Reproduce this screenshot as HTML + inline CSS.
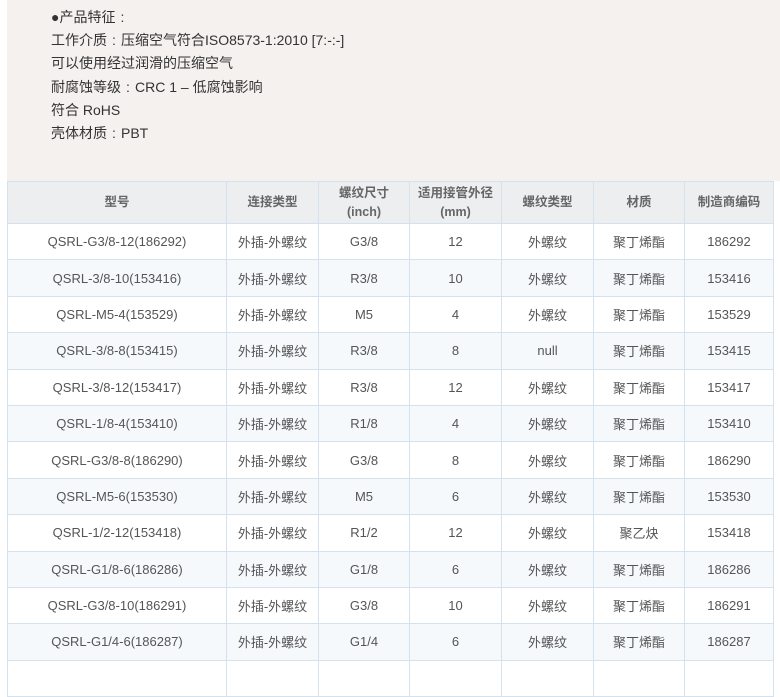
<!DOCTYPE html>
<html><head><meta charset="utf-8"><style>
body{margin:0;width:780px;height:667px;overflow:hidden;background:#fff;font-family:"Liberation Sans","Noto Sans CJK SC",sans-serif;color:#333}
.top{position:absolute;left:7px;top:0;width:773px;height:181px;background:#f4f1ef}
.txt{position:absolute;left:51px;top:6px;font-size:14px;line-height:23.2px;color:#333}
.c{display:inline-block;width:14px;text-align:center}
table{position:absolute;left:7px;top:181px;border-collapse:collapse;table-layout:fixed;width:766px}
td,th{border:1px solid #d5e1ec;text-align:center;font-size:13px;color:#555;font-weight:normal;padding:0}
th{background:#eceef0;height:41px;line-height:19px;font-weight:bold;color:#666;font-size:12.5px}
td{height:35.4px}
tr:nth-child(odd) td{background:#f6f9fc}
</style></head><body>
<div class="top"></div>
<div class="txt">●产品特征<span class="c">:</span><br>工作介质<span class="c">:</span>压缩空气符合ISO8573-1:2010 [7:-:-]<br>可以使用经过润滑的压缩空气<br>耐腐蚀等级<span class="c">:</span>CRC 1 – 低腐蚀影响<br>符合 RoHS<br>壳体材质<span class="c">:</span>PBT</div>
<table>
<colgroup><col style="width:219px"><col style="width:92px"><col style="width:91px"><col style="width:92px"><col style="width:92px"><col style="width:91px"><col style="width:89px"></colgroup>
<tr><th>型号</th><th>连接类型</th><th>螺纹尺寸<br>(inch)</th><th>适用接管外径<br>(mm)</th><th>螺纹类型</th><th>材质</th><th>制造商编码</th></tr>
<tr><td>QSRL-G3/8-12(186292)</td><td>外插-外螺纹</td><td>G3/8</td><td>12</td><td>外螺纹</td><td>聚丁烯酯</td><td>186292</td></tr>
<tr><td>QSRL-3/8-10(153416)</td><td>外插-外螺纹</td><td>R3/8</td><td>10</td><td>外螺纹</td><td>聚丁烯酯</td><td>153416</td></tr>
<tr><td>QSRL-M5-4(153529)</td><td>外插-外螺纹</td><td>M5</td><td>4</td><td>外螺纹</td><td>聚丁烯酯</td><td>153529</td></tr>
<tr><td>QSRL-3/8-8(153415)</td><td>外插-外螺纹</td><td>R3/8</td><td>8</td><td>null</td><td>聚丁烯酯</td><td>153415</td></tr>
<tr><td>QSRL-3/8-12(153417)</td><td>外插-外螺纹</td><td>R3/8</td><td>12</td><td>外螺纹</td><td>聚丁烯酯</td><td>153417</td></tr>
<tr><td>QSRL-1/8-4(153410)</td><td>外插-外螺纹</td><td>R1/8</td><td>4</td><td>外螺纹</td><td>聚丁烯酯</td><td>153410</td></tr>
<tr><td>QSRL-G3/8-8(186290)</td><td>外插-外螺纹</td><td>G3/8</td><td>8</td><td>外螺纹</td><td>聚丁烯酯</td><td>186290</td></tr>
<tr><td>QSRL-M5-6(153530)</td><td>外插-外螺纹</td><td>M5</td><td>6</td><td>外螺纹</td><td>聚丁烯酯</td><td>153530</td></tr>
<tr><td>QSRL-1/2-12(153418)</td><td>外插-外螺纹</td><td>R1/2</td><td>12</td><td>外螺纹</td><td>聚乙炔</td><td>153418</td></tr>
<tr><td>QSRL-G1/8-6(186286)</td><td>外插-外螺纹</td><td>G1/8</td><td>6</td><td>外螺纹</td><td>聚丁烯酯</td><td>186286</td></tr>
<tr><td>QSRL-G3/8-10(186291)</td><td>外插-外螺纹</td><td>G3/8</td><td>10</td><td>外螺纹</td><td>聚丁烯酯</td><td>186291</td></tr>
<tr><td>QSRL-G1/4-6(186287)</td><td>外插-外螺纹</td><td>G1/4</td><td>6</td><td>外螺纹</td><td>聚丁烯酯</td><td>186287</td></tr>
<tr><td>&nbsp;</td><td></td><td></td><td></td><td></td><td></td><td></td></tr>
</table>
</body></html>
